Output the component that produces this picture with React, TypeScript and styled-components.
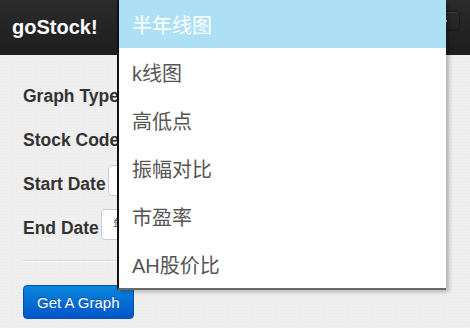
import React from "react";
import styled, { createGlobalStyle } from "styled-components";

const GlobalStyle = createGlobalStyle`
  html, body {
    margin: 0;
    padding: 0;
    background: #efefef;
    font-family: "Liberation Sans", "Noto Sans CJK SC", sans-serif;
  }
`;

const Page = styled.div`
  position: relative;
  width: 470px;
  height: 328px;
  overflow: hidden;
  background-color: #efefef;
  background-image: radial-gradient(rgba(0, 0, 0, 0.025) 1px, transparent 1px);
  background-size: 3px 3px;
`;

const Navbar = styled.header`
  height: 55px;
  display: flex;
  align-items: center;
  justify-content: space-between;
  padding: 0 10px 0 12px;
  background: linear-gradient(to bottom, #2b2b2b, #1e1e1e);
  box-sizing: border-box;
`;

const Brand = styled.div`
  color: #fff;
  font-size: 20px;
  font-weight: bold;
  margin-top: -1px;
`;

const Toggle = styled.button`
  width: 40px;
  height: 20px;
  margin-top: -13px;
  padding: 0 12px 0 10px;
  display: flex;
  flex-direction: column;
  justify-content: center;
  align-items: flex-end;
  background: linear-gradient(to bottom, #2a2a2a, #232323);
  border: 1px solid #1a1a1a;
  border-radius: 4px;
  box-shadow: inset 0 1px 0 rgba(255, 255, 255, 0.1);
`;

const IconBar = styled.span`
  display: block;
  width: 18px;
  height: 2px;
  background: #bbb;
`;

const Form = styled.form`
  padding: 22px 23px 0;
`;

const Row = styled.div`
  display: flex;
  align-items: center;
  gap: 2px;
  height: 31px;
  margin-bottom: 13px;
`;

const Label = styled.label`
  margin-top: 8px;
  color: #333;
  font-size: 17.5px;
  font-weight: bold;
  white-space: nowrap;
`;

const Field = styled.input`
  width: 180px;
  height: 31px;
  box-sizing: border-box;
  padding: 4px 11px;
  border: 1px solid #ccc;
  border-radius: 4px;
  background: #fff;
  font-size: 12px;
  color: #555;
  font-family: "Liberation Sans", "Noto Sans CJK SC", sans-serif;
  &::placeholder {
    color: #666;
  }
`;

const Rule = styled.hr`
  margin: 20px 0 23px;
  border: 0;
  border-top: 1px solid #dcdcdc;
  border-bottom: 1px solid #fff;
`;

const PrimaryButton = styled.button`
  height: 34px;
  padding: 0 13px;
  color: #fff;
  font-size: 15px;
  font-family: "Liberation Sans", sans-serif;
  background: linear-gradient(to bottom, #0a86dc, #0055c9);
  border: 1px solid #0050b8;
  border-radius: 4px;
  text-shadow: 0 -1px 0 rgba(0, 0, 0, 0.25);
`;

const Dropdown = styled.ul`
  position: absolute;
  top: 0;
  left: 117px;
  width: 327px;
  margin: 0;
  padding: 0;
  list-style: none;
  background: #fff;
  border-left: 2px solid #111;
  border-bottom: 2px solid #6a6a6a;
  box-shadow: 3px 2px 4px rgba(0, 0, 0, 0.25);
`;

const Option = styled.li<{ $active?: boolean }>`
  height: 48px;
  display: flex;
  align-items: center;
  padding-left: 13px;
  font-size: 20px;
  font-family: "Liberation Sans", "Noto Sans CJK SC", sans-serif;
  color: ${(p) => (p.$active ? "#fff" : "#555")};
  background: ${(p) => (p.$active ? "#ade0f5" : "#fff")};
`;

const options = ["半年线图", "k线图", "高低点", "振幅对比", "市盈率", "AH股价比"];

export default function App() {
  return (
    <Page>
      <GlobalStyle />
      <Navbar>
        <Brand>goStock!</Brand>
        <Toggle type="button">
          <IconBar />
        </Toggle>
      </Navbar>
      <Form onSubmit={(e) => e.preventDefault()}>
        <Row>
          <Label>Graph Type</Label>
          <Field type="text" />
        </Row>
        <Row>
          <Label>Stock Code</Label>
          <Field type="text" />
        </Row>
        <Row>
          <Label>Start Date</Label>
          <Field type="text" placeholder="年/月/日" />
        </Row>
        <Row>
          <Label>End Date</Label>
          <Field type="text" placeholder="年/月/日" />
        </Row>
        <Rule />
        <PrimaryButton type="submit">Get A Graph</PrimaryButton>
      </Form>
      <Dropdown>
        {options.map((o, i) => (
          <Option key={o} $active={i === 0}>
            {o}
          </Option>
        ))}
      </Dropdown>
    </Page>
  );
}
